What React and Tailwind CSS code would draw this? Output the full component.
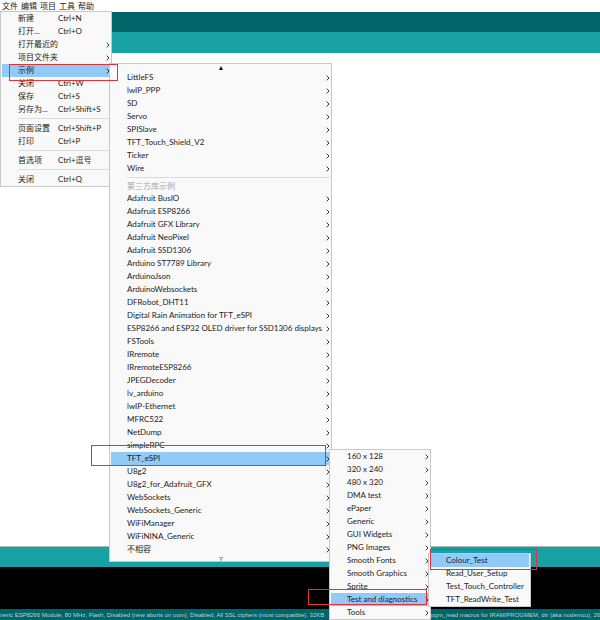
import React from 'react';

const fileItems = [
    { label: '新建', keys: 'Ctrl+N' },
    { label: '打开...', keys: 'Ctrl+O' },
    { label: '打开最近的', sub: true },
    { label: '项目文件夹', sub: true },
    { label: '示例', sub: true, active: true },
    { label: '关闭', keys: 'Ctrl+W' },
    { label: '保存', keys: 'Ctrl+S' },
    { label: '另存为...', keys: 'Ctrl+Shift+S' },
    { type: 'separator' },
    { label: '页面设置', keys: 'Ctrl+Shift+P' },
    { label: '打印', keys: 'Ctrl+P' },
    { type: 'separator' },
    { label: '首选项', keys: 'Ctrl+逗号' },
    { type: 'separator' },
    { label: '关闭', keys: 'Ctrl+Q' }
];

const folders = (names, active) => names.map((label) => ({ label, sub: true, active: label === active }));

const exampleItems = [
    ...folders(['LittleFS', 'lwIP_PPP', 'SD', 'Servo', 'SPISlave', 'TFT_Touch_Shield_V2', 'Ticker', 'Wire']),
    { type: 'separator' },
    { type: 'heading', label: '第三方库示例' },
    ...folders([
        'Adafruit BusIO',
        'Adafruit ESP8266',
        'Adafruit GFX Library',
        'Adafruit NeoPixel',
        'Adafruit SSD1306',
        'Arduino ST7789 Library',
        'ArduinoJson',
        'ArduinoWebsockets',
        'DFRobot_DHT11',
        'Digital Rain Animation for TFT_eSPI',
        'ESP8266 and ESP32 OLED driver for SSD1306 displays',
        'FSTools',
        'IRremote',
        'IRremoteESP8266',
        'JPEGDecoder',
        'lv_arduino',
        'lwIP-Ethernet',
        'MFRC522',
        'NetDump',
        'simpleRPC',
        'TFT_eSPI',
        'U8g2',
        'U8g2_for_Adafruit_GFX',
        'WebSockets',
        'WebSockets_Generic',
        'WiFiManager',
        'WiFiNINA_Generic',
        '不相容'
    ], 'TFT_eSPI')
];

const espiItems = folders([
    '160 x 128',
    '320 x 240',
    '480 x 320',
    'DMA test',
    'ePaper',
    'Generic',
    'GUI Widgets',
    'PNG Images',
    'Smooth Fonts',
    'Smooth Graphics',
    'Sprite',
    'Test and diagnostics',
    'Tools'
], 'Test and diagnostics');

const testItems = [
    { label: 'Colour_Test', active: true },
    { label: 'Read_User_Setup' },
    { label: 'Test_Touch_Controller' },
    { label: 'TFT_ReadWrite_Test' }
];

const Chevron = () => (
    <svg viewBox="0 0 4 6" className="ml-auto h-[6px] w-[4px] shrink-0" fill="none" stroke="#222" strokeWidth="0.9">
        <path d="M0.7 0.6 L3 3 L0.7 5.4" />
    </svg>
);

const MenuItem = ({ item }) => {
    if (item.type === 'separator') {
        return <li role="separator" className="ml-4 h-[6px] pt-[2px]"><div className="border-t border-[#dcdcdc]" /></li>;
    }
    if (item.type === 'heading') {
        return <li className="h-[11px] pl-4 leading-[11px] text-[#a5a5a5]">{item.label}</li>;
    }
    return (
        <li>
            <button className={`flex h-[13px] w-full items-center pl-4 text-left leading-[13px] whitespace-nowrap ${item.active ? 'bg-[#91c9f7]' : ''}`}>
                <span className={item.keys ? 'w-10 shrink-0' : ''}>{item.label}</span>
                {item.keys && <span>{item.keys}</span>}
                {item.sub && <Chevron />}
            </button>
        </li>
    );
};

const Menu = ({ items, className, before, after }) => (
    <div className={`absolute border border-[#c8c8c8] bg-[#f9f9f9] px-px text-[#1c1c1c] ${className}`}>
        {before}
        <ul>
            {items.map((item, index) => <MenuItem key={index} item={item} />)}
        </ul>
        {after}
    </div>
);

// Red frame drawn over a menu entry
const Marker = ({ className }) => (
    <div className={`pointer-events-none absolute border border-[#e8303a] ${className}`} />
);

const ScrollUp = () => (
    <div className="flex h-[7px] items-center justify-center">
        <svg viewBox="0 0 4 4" className="size-1"><path d="M2 0 L4 4 H0 Z" fill="#111" /></svg>
    </div>
);

const ScrollDown = () => (
    <div className="flex h-[5px] items-center justify-center">
        <svg viewBox="0 0 4 4" className="size-1"><path d="M0.4 0.5 H3.6 L2 3.6 Z" fill="none" stroke="#555" strokeWidth="0.5" /></svg>
    </div>
);

const App = () => {
    return (
        <div className="relative flex h-screen flex-col overflow-hidden bg-white font-['Lato','Noto_Sans_CJK_SC',sans-serif] text-[8px]">
            <nav className="flex h-3 shrink-0 gap-[3px] pl-[2px] leading-[11px] text-[#222]">
                {['文件', '编辑', '项目', '工具', '帮助'].map((name) => (
                    <button key={name}>{name}</button>
                ))}
            </nav>
            <div className="h-5 shrink-0 bg-[#006468]" />
            <div className="h-[21px] shrink-0 bg-[#17a1a5]" />
            <main className="flex-1" />
            <div className="h-[21px] shrink-0 border-t border-[#b5b5b5] bg-[#17a1a5]" />
            <div className="h-[42px] shrink-0 bg-black" />
            <footer className="flex h-[11px] shrink-0 bg-[#006468] font-['Liberation_Sans',sans-serif] text-[6px] leading-[13px] whitespace-nowrap text-[#b4d6d7]">
                <span className="w-[431px] shrink-0">neric ESP8266 Module, 80 MHz, Flash, Disabled (new aborts on oom), Disabled, All SSL ciphers (most compatible), 32KB</span>
                <span>pgm_read macros for IRAM/PROGMEM, dtr (aka nodemcu), 26</span>
            </footer>

            <Menu items={fileItems} className="top-[11px] left-0 w-28" />
            <Menu items={exampleItems} className="top-[63px] left-[109px] w-[223px]" before={<ScrollUp />} after={<ScrollDown />} />
            <Menu items={espiItems} className="top-[449px] left-[329px] w-[102px]" />
            <Menu items={testItems} className="top-[553px] left-[428px] w-[103px]" />

            <Marker className="top-16 left-[9px] h-[17px] w-[109px]" />
            <Marker className="top-[445px] left-[91px] h-[21px] w-[235px]" />
            <Marker className="top-[589px] left-[308px] h-4 w-[119px]" />
            <Marker className="top-[549px] left-[430px] h-[21px] w-[107px]" />
        </div>
    );
};

export default App;
